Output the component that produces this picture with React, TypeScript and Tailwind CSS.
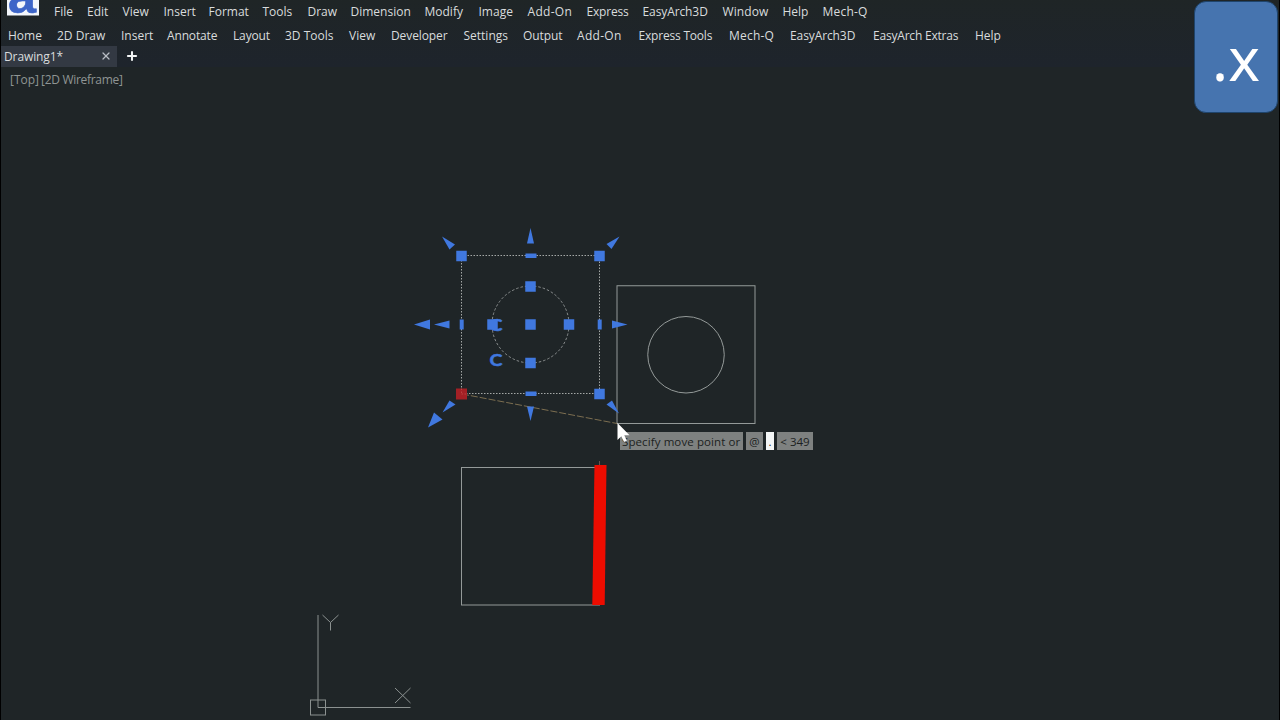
import { Plus, X } from 'lucide-react';

interface MenuItem {
  label: string;
  width: string;
  tracking?: string;
}

const menuItems: MenuItem[] = [
  { label: 'File', width: 'w-[33px]' },
  { label: 'Edit', width: 'w-[35.5px]' },
  { label: 'View', width: 'w-[41px]' },
  { label: 'Insert', width: 'w-[45px]' },
  { label: 'Format', width: 'w-[54px]' },
  { label: 'Tools', width: 'w-[45px]' },
  { label: 'Draw', width: 'w-[43px]' },
  { label: 'Dimension', width: 'w-[74px]' },
  { label: 'Modify', width: 'w-[54px]' },
  { label: 'Image', width: 'w-[49px]' },
  { label: 'Add-On', width: 'w-[59px]', tracking: 'tracking-[0.3px]' },
  { label: 'Express', width: 'w-[56px]', tracking: 'tracking-[-0.2px]' },
  { label: 'EasyArch3D', width: 'w-[80px]', tracking: 'tracking-[-0.1px]' },
  { label: 'Window', width: 'w-[60px]', tracking: 'tracking-[0.1px]' },
  { label: 'Help', width: 'w-[40px]' },
  { label: 'Mech-Q', width: 'w-[50px]', tracking: 'tracking-[0.2px]' },
];

const ribbonTabs: MenuItem[] = [
  { label: 'Home', width: 'w-[49px]' },
  { label: '2D Draw', width: 'w-[64px]' },
  { label: 'Insert', width: 'w-[46px]' },
  { label: 'Annotate', width: 'w-[66px]', tracking: 'tracking-[-0.15px]' },
  { label: 'Layout', width: 'w-[52px]', tracking: 'tracking-[-0.15px]' },
  { label: '3D Tools', width: 'w-[64px]' },
  { label: 'View', width: 'w-[42px]' },
  { label: 'Developer', width: 'w-[72.5px]', tracking: 'tracking-[-0.1px]' },
  { label: 'Settings', width: 'w-[59.5px]' },
  { label: 'Output', width: 'w-[54px]', tracking: 'tracking-[-0.1px]' },
  { label: 'Add-On', width: 'w-[61.5px]', tracking: 'tracking-[0.3px]' },
  { label: 'Express Tools', width: 'w-[90.5px]', tracking: 'tracking-[-0.2px]' },
  { label: 'Mech-Q', width: 'w-[61px]', tracking: 'tracking-[0.2px]' },
  { label: 'EasyArch3D', width: 'w-[83px]', tracking: 'tracking-[-0.1px]' },
  { label: 'EasyArch Extras', width: 'w-[102px]', tracking: 'tracking-[-0.2px]' },
  { label: 'Help', width: 'w-[40px]' },
];

// Square grips, by centre
const grips = [
  [461.5, 256],
  [599.5, 256],
  [530.5, 286.5],
  [492.5, 324.5],
  [530.5, 324.5],
  [569, 324.5],
  [530.5, 363],
  [599.5, 394],
];

const arrows = [
  '530.5,228 527,243.5 534,243.5',
  '530.5,421 527,406.5 534,406.5',
  '442,236.5 455,244.5 449.5,249.5',
  '619.5,236.5 606.5,244 611.5,249',
  '619,413.5 606.5,404.5 612,400.5',
  '442.5,412.5 449.5,400.5 455.5,404.5',
  '428,427.5 434,412.5 442.5,419.5',
  '414,324.5 430,319.5 430,329.5',
  '434,324.5 449.5,320.5 449.5,328.5',
  '627.5,324.5 612,320.5 612,328.5',
];

function MenuRow({ items }: { items: MenuItem[] }) {
  return (
    <>
      {items.map((item) => (
        <span key={item.label} className={`${item.width} ${item.tracking ?? ''} shrink-0 whitespace-nowrap`}>
          {item.label}
        </span>
      ))}
    </>
  );
}

function Logo() {
  return (
    <svg width="32" height="16" viewBox="0 0 32 16" className="shrink-0">
      <rect width="32" height="15.5" fill="#f3f6fb" />
      <text
        x="1"
        y="12.5"
        fontSize="47"
        fontWeight="700"
        fontFamily="Liberation Sans, Arial, sans-serif"
        fill="#3d65c8"
        stroke="#3d65c8"
        strokeWidth="0.6"
        textLength="28"
        lengthAdjust="spacingAndGlyphs"
      >
        a
      </text>
    </svg>
  );
}

function Drawing() {
  return (
    <svg width="1278" height="653" viewBox="1 67 1278 653" className="block" fill="none">
      {/* Selected block */}
      <g stroke="#a4a8a7">
        <rect x="461.5" y="255.5" width="138" height="138" strokeDasharray="1.5 1.5" />
        <circle cx="530.5" cy="324.5" r="38.5" strokeDasharray="2.5 2" strokeOpacity="0.8" />
      </g>

      {/* Other geometry */}
      <g stroke="#949a99">
        <rect x="617" y="285.75" width="138" height="137.75" />
        <circle cx="686" cy="354.75" r="38.25" />
        <rect x="461.5" y="467.5" width="138" height="137.5" />
      </g>
      <path d="M599.5 461v4" stroke="#6b5050" />
      <path d="M594.5 465H606.5L604.7 605H592.3Z" fill="#ed0c00" />

      {/* Rubber band */}
      <path d="M462 394L617 423.5" stroke="#7c6e50" strokeDasharray="7 2" />

      {/* Grips */}
      <g fill="#4078df">
        {grips.map(([x, y]) => (
          <rect key={`${x}-${y}`} x={x - 5.25} y={y - 5.25} width="10.5" height="10.5" />
        ))}
        <rect x="525.5" y="253.5" width="11" height="4.5" />
        <rect x="525.5" y="391.5" width="11" height="4.5" />
        <rect x="459.7" y="319.5" width="4" height="10" />
        <rect x="597.7" y="319.5" width="4" height="10" />
        {arrows.map((points) => (
          <polygon key={points} points={points} />
        ))}
      </g>
      <rect x="456" y="388.5" width="11" height="11" fill="#a32025" />
      <path d="M461.5 388.5v6M461.5 394h6" stroke="#c85a58" strokeOpacity="0.6" strokeDasharray="1.5 1.5" />
      <g
        fill="#4078df"
        stroke="#4078df"
        strokeWidth="0.5"
        fontFamily="Lato, sans-serif"
        fontSize="17"
        fontWeight="700"
      >
        <text x="489.5" y="330.5" textLength="13" lengthAdjust="spacingAndGlyphs">C</text>
        <text x="489.5" y="365.5" textLength="13" lengthAdjust="spacingAndGlyphs">C</text>
      </g>

      {/* UCS icon */}
      <g stroke="#8b9190">
        <path d="M318 615V707.5H410.5" />
        <rect x="310.5" y="700" width="15" height="15" />
        <path d="M322.5 615L330.5 622.5L338.5 615M330.5 622.5V630.5" />
        <path d="M395 688L410.5 703M410.5 688L395 703" />
      </g>
    </svg>
  );
}

function DynamicInput() {
  return (
    <div className="absolute left-[619px] top-[432px] flex h-[18px] gap-[3px] whitespace-nowrap text-[11.5px] leading-[19px] text-[#1c1f20]">
      <span className="w-[123px] bg-[#7e8180] pl-[2px] tracking-[0.1px]">Specify move point or</span>
      <span className="w-[17px] bg-[#7e8180] text-center">@</span>
      <span className="w-[8px] bg-[#f4f6f6] text-center">.</span>
      <span className="w-[36px] bg-[#7e8180] text-center">&lt; 349</span>
    </div>
  );
}

function Cursor() {
  return (
    <svg width="14" height="20" viewBox="0 0 14 20" className="absolute left-[616px] top-[423px]">
      <path d="M0.5 0V17L4.3 13.3L7 19L9.8 17.8L7.3 12.3H12.5Z" fill="#fff" />
    </svg>
  );
}

export default function App() {
  return (
    <div className="relative flex h-[720px] w-[1280px] flex-col overflow-hidden border-x border-black bg-[#1f2527] font-['Open_Sans','Noto_Sans',sans-serif] text-[12px] text-[#d9dcdd]">
      <header className="bg-gradient-to-b from-[#1f2526] to-[#1e242c]">
        <div className="flex h-[23px] pl-[6px]">
          <Logo />
          <nav className="flex pl-[15px] leading-[24px]">
            <MenuRow items={menuItems} />
          </nav>
        </div>
        <nav className="flex h-[22px] pl-[7px] leading-[26px]">
          <MenuRow items={ribbonTabs} />
        </nav>
        <div className="flex h-[22px] items-center">
          <div className="flex h-[21px] w-[116px] items-center justify-between bg-[#333943] pl-[3px] pr-[5px]">
            <span className="pt-px tracking-[-0.1px]">Drawing1*</span>
            <X className="size-3 text-[#b9bdc5]" strokeWidth={2.5} />
          </div>
          <Plus className="ml-[8px] size-3.5 text-[#f2f4f5]" strokeWidth={3.5} />
        </div>
      </header>

      <main>
        <Drawing />
      </main>

      <div className="absolute left-[9px] top-[71px] flex gap-[2px] leading-[18px] text-[#8f9594]">
        <span>[Top]</span>
        <span className="tracking-[-0.3px]">[2D Wireframe]</span>
      </div>

      <DynamicInput />
      <Cursor />

      {/* Keystroke overlay */}
      <div className="absolute left-[1193px] top-[1px] flex h-[112px] w-[84px] items-center justify-center rounded-[12px] border border-[#1f446b] bg-[#4674af] pt-[2px] font-['Noto_Sans',sans-serif] text-[60px] text-white">
        <span className="flex items-baseline">
          <span>.</span>
          <span>x</span>
        </span>
      </div>
    </div>
  );
}
